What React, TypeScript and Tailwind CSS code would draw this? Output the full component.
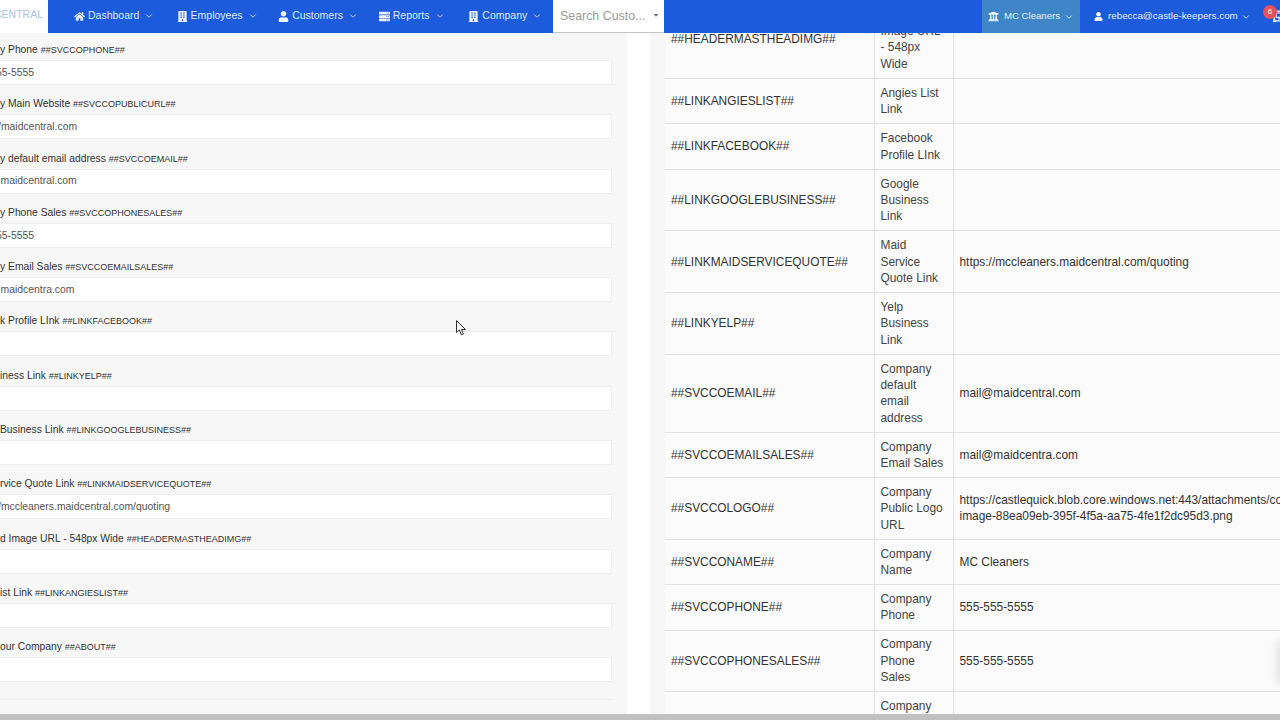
import { FaHome, FaBuilding, FaUser, FaServer, FaUniversity, FaCaretDown, FaRegObjectGroup } from "react-icons/fa";
import { ChevronDown } from "lucide-react";

const font = "font-['Liberation_Sans',Arial,sans-serif]";

const fields = [
  { label: "y Phone ", code: "##SVCCOPHONE##", value: "55-5555", shift: "-ml-[4px]" },
  { label: "y Main Website ", code: "##SVCCOPUBLICURL##", value: "/maidcentral.com", shift: "-ml-[2px]" },
  { label: "y default email address ", code: "##SVCCOEMAIL##", value: "@maidcentral.com", shift: "-ml-[10px]" },
  { label: "y Phone Sales ", code: "##SVCCOPHONESALES##", value: "55-5555", shift: "-ml-[4px]" },
  { label: "y Email Sales ", code: "##SVCCOEMAILSALES##", value: "@maidcentra.com", shift: "-ml-[10px]" },
  { label: "k Profile LInk ", code: "##LINKFACEBOOK##", value: "", shift: "" },
  { label: "iness Link ", code: "##LINKYELP##", value: "", shift: "" },
  { label: "Business Link ", code: "##LINKGOOGLEBUSINESS##", value: "", shift: "" },
  { label: "rvice Quote Link ", code: "##LINKMAIDSERVICEQUOTE##", value: "/mccleaners.maidcentral.com/quoting", shift: "-ml-[2px]" },
  { label: "d Image URL - 548px Wide ", code: "##HEADERMASTHEADIMG##", value: "", shift: "" },
  { label: "ist Link ", code: "##LINKANGIESLIST##", value: "", shift: "" },
  { label: "our Company ", code: "##ABOUT##", value: "", shift: "" },
];

const rows: [string, string[], string[]][] = [
  ["##HEADERMASTHEADIMG##", ["Masthead", "Image URL", "- 548px", "Wide"], []],
  ["##LINKANGIESLIST##", ["Angies List", "Link"], []],
  ["##LINKFACEBOOK##", ["Facebook", "Profile LInk"], []],
  ["##LINKGOOGLEBUSINESS##", ["Google", "Business", "Link"], []],
  ["##LINKMAIDSERVICEQUOTE##", ["Maid", "Service", "Quote Link"], ["https://mccleaners.maidcentral.com/quoting"]],
  ["##LINKYELP##", ["Yelp", "Business", "Link"], []],
  ["##SVCCOEMAIL##", ["Company", "default", "email", "address"], ["mail@maidcentral.com"]],
  ["##SVCCOEMAILSALES##", ["Company", "Email Sales"], ["mail@maidcentra.com"]],
  ["##SVCCOLOGO##", ["Company", "Public Logo", "URL"], ["https://castlequick.blob.core.windows.net:443/attachments/company-", "image-88ea09eb-395f-4f5a-aa75-4fe1f2dc95d3.png"]],
  ["##SVCCONAME##", ["Company", "Name"], ["MC Cleaners"]],
  ["##SVCCOPHONE##", ["Company", "Phone"], ["555-555-5555"]],
  ["##SVCCOPHONESALES##", ["Company", "Phone", "Sales"], ["555-555-5555"]],
  ["", ["Company", "Public"], []],
];

function Lines({ items }: { items: string[] }) {
  return (
    <>
      {items.map((t) => (
        <div key={t} className="whitespace-nowrap">{t}</div>
      ))}
    </>
  );
}

function NavItem({ icon, label, className }: { icon: React.ReactNode; label: string; className: string }) {
  return (
    <div className={`flex items-center text-[#dfe9fb] text-[10.5px] ${className}`}>
      <span className="text-[11px] mr-[3px] text-[#eef3fd]">{icon}</span>
      <span>{label}</span>
      <ChevronDown size={10} strokeWidth={2} className="ml-[5px] text-[#dfe9fb]" />
    </div>
  );
}

export default function App() {
  return (
    <div className={`${font} relative w-[1280px] h-[720px] overflow-hidden flex flex-col bg-white`}>
      <header className="relative z-10 h-[33px] shrink-0 bg-[#1c5bdc] flex items-stretch">
        <div className="w-[48px] bg-white overflow-hidden flex items-center justify-end shrink-0">
          <span className="text-[10.5px] text-[#a9c3e6] whitespace-nowrap mr-[5px] mb-[4px]">CENTRAL</span>
        </div>
        <div className="flex items-center pl-[26px] w-[505px] shrink-0 pb-[1px]">
          <NavItem icon={<FaHome />} label="Dashboard" className="w-[103px]" />
          <NavItem icon={<FaBuilding />} label="Employees" className="w-[102px]" />
          <NavItem icon={<FaUser />} label="Customers" className="w-[101px]" />
          <NavItem icon={<FaServer />} label="Reports" className="w-[90px]" />
          <NavItem icon={<FaBuilding />} label="Company" className="w-[85px]" />
        </div>
        <div className="w-[111px] shrink-0 bg-white border-b border-[#c4c4c4] flex items-center justify-between pl-[7px] pr-[4px] text-[12.4px] text-[#9a9a9a]">
          <span>Search Custo...</span>
          <FaCaretDown className="text-[8px] text-[#777] mb-[2px]" />
        </div>
        <div className="flex-1" />
        <div className="w-[98px] shrink-0 bg-[#3f86c8] flex items-center pl-[6px] text-[9.6px] text-[#e6effa]">
          <FaUniversity className="text-[11px] text-white mr-[5px]" />
          <span>MC Cleaners</span>
          <ChevronDown size={10} strokeWidth={2} className="ml-[4px]" />
        </div>
        <div className="w-[200px] shrink-0 flex items-center pl-[14px] text-[9.8px] text-[#e6effa] relative">
          <FaUser className="text-[9px] text-white mr-[5px]" />
          <span>rebecca@castle-keepers.com</span>
          <ChevronDown size={10} strokeWidth={2} className="ml-[3px]" />
          <FaRegObjectGroup className="absolute left-[193px] top-[9px] text-[14px] text-white" />
          <span className="absolute left-[183px] top-[5px] w-[14px] h-[14px] rounded-full bg-[#e8505b] text-white text-[8px] flex items-center justify-center">6</span>
        </div>
      </header>

      <main className="flex-1 min-h-0 flex overflow-hidden">
        <section className="w-[627px] shrink-0 bg-[#f7f7f7] overflow-hidden pt-[10px]">
          {fields.map((f) => (
            <div key={f.code} className="h-[54.3px] flex flex-col">
              <div className="h-[17px] leading-[14px] text-[10.3px] text-[#333] whitespace-nowrap">
                {f.label}
                <span className="text-[9px]">{f.code}</span>
              </div>
              <div className="w-[612px] h-[25px] bg-white border-y border-r border-[#eeeeee] text-[10.4px] text-[#555] flex items-center whitespace-nowrap">
                <span className={f.shift}>{f.value}</span>
              </div>
            </div>
          ))}
          <div className="w-[612px] h-px mt-[4px] bg-[#eeeeee]" />
        </section>
        <div className="w-[23px] shrink-0 bg-white" />
        <div className="w-[15px] shrink-0 bg-[#f7f7f7]" />
        <section className="flex-1 min-w-0 overflow-hidden bg-[#fbfbfb]">
          <table className="-mt-[32px] w-[760px] table-fixed border-collapse text-[11.9px] leading-[16.3px] text-[#333]">
            <colgroup>
              <col className="w-[209px]" />
              <col className="w-[79px]" />
              <col />
            </colgroup>
            <tbody>
              {rows.map(([code, desc, val], i) => (
                <tr key={i} className="border-b border-[#e4e4e4]">
                  <td className="px-[6px] py-[5.9px] whitespace-nowrap align-middle">{code}</td>
                  <td className="pl-[6px] pr-0 py-[5.9px] border-x border-[#e4e4e4] align-middle text-[#444]">
                    <Lines items={desc} />
                  </td>
                  <td className="px-[6px] py-[5.9px] align-middle">
                    <Lines items={val} />
                  </td>
                </tr>
              ))}
            </tbody>
          </table>
        </section>
      </main>

      <div className="h-[6px] shrink-0 bg-[#c1c1c1]" />

      <div className="absolute right-[-6px] top-[640px] w-[10px] h-[45px] rounded-full bg-[#e6e6e6] blur-[3px]" />

      <svg className="absolute left-[456px] top-[320px]" width="11" height="16" viewBox="0 0 11 16">
        <path d="M0.5 0.5 V12.5 L3.4 10 L5.4 14.8 L7.4 14 L5.4 9.5 L9.5 9.5 Z" fill="#f8f8f8" stroke="#333" strokeWidth="1" />
      </svg>
    </div>
  );
}
